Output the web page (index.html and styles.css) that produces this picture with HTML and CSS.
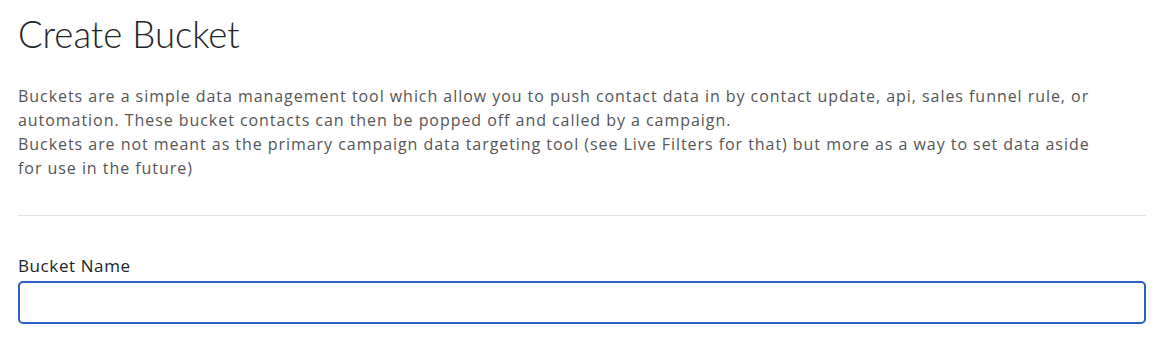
FILE: index.html
```html
<!DOCTYPE html>
<html>
<head>
<meta charset="utf-8">
<link rel="stylesheet" href="styles.css">
</head>
<body>
<div class="page">
  <h1 class="title">Create Bucket</h1>
  <p class="desc">Buckets are a simple data management tool which allow you to push contact data in by contact update, api, sales funnel rule, or automation. These bucket contacts can then be popped off and called by a campaign.<br>Buckets are not meant as the primary campaign data targeting tool (see Live Filters for that) but more as a way to set data aside for use in the future)</p>
  <hr class="divider">
  <div class="field">
    <label class="label" for="bn">Bucket Name</label>
    <input class="input" id="bn" type="text">
  </div>
</div>
</body>
</html>
```
FILE: styles.css
```css
html, body {
  margin: 0;
  padding: 0;
  background: #fff;
}
.page {
  padding: 12px 16px 0 18px;
  font-family: "Open Sans", "Noto Sans", sans-serif;
  color: #212529;
}
.title {
  margin: 0;
  font-family: Lato, "Open Sans", sans-serif;
  font-size: 36.5px;
  font-weight: 300;
  line-height: 44px;
  color: #212529;
}
.desc {
  margin: 28px 28px 0 0;
  font-size: 16px;
  letter-spacing: 0.95px;
  line-height: 24px;
  color: #555;
}
.divider {
  margin: 35px 0 0;
  border: 0;
  border-top: 1px solid #e2e2e2;
}
.field {
  margin-top: 38px;
  display: flex;
  flex-direction: column;
}
.label {
  font-size: 17px;
  letter-spacing: 0.6px;
  line-height: 24px;
  color: #212529;
  margin-bottom: 3px;
}
.input {
  box-sizing: border-box;
  height: 43px;
  border: 2px solid #2a5fcc;
  border-radius: 5px;
  outline: none;
  width: 100%;
  background: #fff;
}
```
